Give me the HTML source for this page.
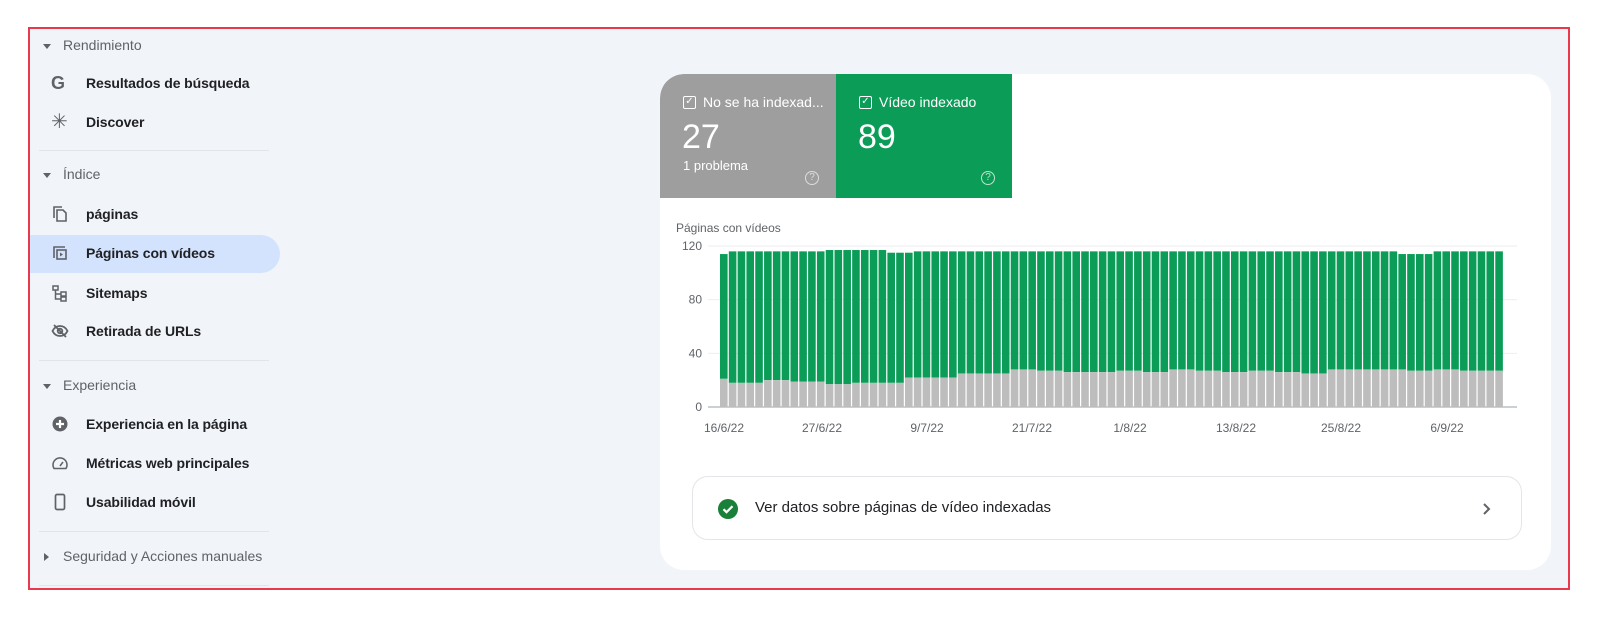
<!DOCTYPE html>
<html><head><meta charset="utf-8"><style>
*{margin:0;padding:0;box-sizing:border-box}
body{width:1600px;height:623px;background:#fff;font-family:"Liberation Sans",Arial,sans-serif;position:relative;overflow:hidden}
#frame{position:absolute;left:28px;top:27px;width:1542px;height:563px;border:2px solid #e8394d;background:#f1f4f9;overflow:hidden}
.a{position:absolute}
.hd{position:absolute;left:33px;font-size:14px;color:#5f6368}
.tri{position:absolute;left:13px;width:0;height:0;border-left:4px solid transparent;border-right:4px solid transparent;border-top:5px solid #5f6368}
.tri.r{border-top:4px solid transparent;border-bottom:4px solid transparent;border-left:5px solid #5f6368;border-right:0}
.it{position:absolute;left:56px;font-size:14px;color:#202124;font-weight:bold;letter-spacing:-0.1px}
.ic{position:absolute;left:21px;width:18px;height:18px}
.div{position:absolute;left:9px;width:230px;height:1px;background:#e1e4e8}
</style></head><body>
<div id="frame">
 <div class="a" style="left:-2px;top:206px;width:252px;height:38px;background:#d3e3fd;border-radius:0 19px 19px 0"></div>
 <div class="tri" style="top:15px"></div><div class="hd" style="top:8px">Rendimiento</div>
 <div class="ic" style="top:45px;font-weight:bold;font-size:18px;color:#5f6368;line-height:18px">G</div><div class="it" style="top:46px">Resultados de búsqueda</div>
 <div class="ic" style="top:84px;font-size:20px;color:#5f6368;line-height:18px">✳</div><div class="it" style="top:85px">Discover</div>
 <div class="div" style="top:121px"></div>
 <div class="tri" style="top:144px"></div><div class="hd" style="top:137px">Índice</div>
 <svg class="ic" style="top:176px" viewBox="0 0 18 18" fill="none" stroke="#5f6368" stroke-width="1.6"><path d="M3 13V2h8"/><path d="M6 5h6l3 3v8H6z"/></svg><div class="it" style="top:177px">páginas</div>
 <svg class="ic" style="top:215px" viewBox="0 0 18 18" fill="none" stroke="#5f6368" stroke-width="1.6"><path d="M3 14V3h11"/><rect x="6" y="6" width="9" height="9"/><path d="M9 8.5v4l3-2z" fill="#5f6368" stroke="none"/></svg><div class="it" style="top:216px">Páginas con vídeos</div>
 <svg class="ic" style="top:255px" viewBox="0 0 18 18" fill="none" stroke="#5f6368" stroke-width="1.5"><rect x="2" y="2" width="5" height="4"/><rect x="10" y="8" width="5" height="4"/><rect x="10" y="13" width="5" height="4"/><path d="M4.5 6v9h5.5M4.5 10h5.5"/></svg><div class="it" style="top:256px">Sitemaps</div>
 <svg class="ic" style="top:293px" viewBox="0 0 18 18" fill="none" stroke="#5f6368" stroke-width="1.8"><path d="M1.5 9c2-4 5-5 7.5-5s5.5 1 7.5 5c-2 4-5 5-7.5 5s-5.5-1-7.5-5z"/><circle cx="9" cy="9" r="2.3"/><path d="M3 3l12 12"/></svg><div class="it" style="top:294px">Retirada de URLs</div>
 <div class="div" style="top:331px"></div>
 <div class="tri" style="top:355px"></div><div class="hd" style="top:348px">Experiencia</div>
 <svg class="ic" style="top:386px" viewBox="0 0 18 18"><circle cx="9" cy="9" r="7.5" fill="#5f6368"/><path d="M9 5v8M5 9h8" stroke="#fff" stroke-width="2.2"/></svg><div class="it" style="top:387px">Experiencia en la página</div>
 <svg class="ic" style="top:425px" viewBox="0 0 18 18" fill="none" stroke="#5f6368" stroke-width="1.5"><path d="M3 14.5a7 7 0 1 1 12 0z"/><path d="M9 12l3-4"/></svg><div class="it" style="top:426px">Métricas web principales</div>
 <svg class="ic" style="top:464px" viewBox="0 0 18 18" fill="none" stroke="#5f6368" stroke-width="1.7"><rect x="4.5" y="1.5" width="9" height="15" rx="1.5"/></svg><div class="it" style="top:465px">Usabilidad móvil</div>
 <div class="div" style="top:502px"></div>
 <div class="tri r" style="top:524px;left:14px"></div><div class="hd" style="top:519px">Seguridad y Acciones manuales</div>
 <div class="div" style="top:556px"></div>

 <div class="a" style="left:630px;top:45px;width:891px;height:496px;background:#fff;border-radius:24px;overflow:hidden">
  <div class="a" style="left:0;top:0;width:176px;height:124px;background:#9e9e9e;border-top-left-radius:24px;color:#fff">
   <div class="a" style="left:23px;top:22px;width:13px;height:13px;border:1.5px solid #fff;border-radius:2px;font-size:10px;line-height:10px;text-align:center">✓</div>
   <div class="a" style="left:43px;top:20px;font-size:14px">No se ha indexad...</div>
   <div class="a" style="left:22px;top:44px;font-size:34px">27</div>
   <div class="a" style="left:23px;top:84px;font-size:13px">1 problema</div>
   <div class="a" style="left:145px;top:97px;width:14px;height:14px;border:1.3px solid #ddd;border-radius:50%;font-size:10px;line-height:12px;text-align:center;color:#ddd">?</div>
  </div>
  <div class="a" style="left:176px;top:0;width:176px;height:124px;background:#0b9d57;color:#fff">
   <div class="a" style="left:23px;top:22px;width:13px;height:13px;border:1.5px solid #fff;border-radius:2px;font-size:10px;line-height:10px;text-align:center">✓</div>
   <div class="a" style="left:43px;top:20px;font-size:14px">Vídeo indexado</div>
   <div class="a" style="left:22px;top:44px;font-size:34px">89</div>
   <div class="a" style="left:145px;top:97px;width:14px;height:14px;border:1.3px solid #bfe3cd;border-radius:50%;font-size:10px;line-height:12px;text-align:center;color:#bfe3cd">?</div>
  </div>
  <div class="a" style="left:16px;top:147px;font-size:12px;color:#5f6368">Páginas con vídeos</div>
  <svg class="a" style="left:0;top:0" width="891" height="400" id="ch"></svg>
  <div class="a" style="left:32px;top:402px;width:830px;height:64px;border:1px solid #e3e5e8;border-radius:16px">
   <svg class="a" style="left:25px;top:22px" width="20" height="20" viewBox="0 0 20 20"><circle cx="10" cy="10" r="10" fill="#188038"/><path d="M5.5 10.2l3 3 6-6" stroke="#fff" stroke-width="2.2" fill="none"/></svg>
   <div class="a" style="left:62px;top:22px;font-size:15px;color:#202124">Ver datos sobre páginas de vídeo indexadas</div>
   <svg class="a" style="left:788px;top:25px" width="12" height="14" viewBox="0 0 12 14"><path d="M3 2l5 5-5 5" stroke="#5f6368" stroke-width="2" fill="none"/></svg>
  </div>
 </div>
</div>
<script>
var s=document.getElementById('ch'),h='';
var ox=630+30,oy=45+29;
function X(x){return x-ox}function Y(y){return y-oy}
var y0=407,k=161/120;
[[0,'0'],[40,'40'],[80,'80'],[120,'120']].forEach(function(t){var y=y0-t[0]*k;
h+='<line x1="'+X(708)+'" x2="'+X(1517)+'" y1="'+Y(y)+'" y2="'+Y(y)+'" stroke="'+(t[0]?'#eceef0':'#9aa0a6')+'"/>';
h+='<text x="'+X(702)+'" y="'+(Y(y)+4)+'" text-anchor="end" font-size="12" fill="#5f6368" font-family="Liberation Sans">'+t[1]+'</text>';});
var g=[21,18,18,18,18,20,20,20,19,19,19,19,17,17,17,18,18,18,18,18,18,22,22,22,22,22,22,25,25,25,25,25,25,28,28,28,27,27,27,26,26,26,26,26,26,27,27,27,26,26,26,28,28,28,27,27,27,26,26,26,27,27,27,26,26,26,25,25,25,28,28,28,28,28,28,28,28,28,27,27,27,28,28,28,27,27,27,27,27];
for(var i=0;i<89;i++){var t=116;if(i==0)t=114;else if(i>=12&&i<=18)t=117;else if(i>=19&&i<=21)t=115;else if(i>=77&&i<=80)t=114;
var x=720+i*8.81,gv=g[i]||27;
h+='<rect x="'+X(x)+'" y="'+Y(y0-t*k)+'" width="7.6" height="'+((t-gv)*k)+'" fill="#0b9d57"/>';
h+='<rect x="'+X(x)+'" y="'+Y(y0-gv*k)+'" width="7.6" height="'+(gv*k)+'" fill="#bdbdbd"/>';}
[[724,'16/6/22'],[822,'27/6/22'],[927,'9/7/22'],[1032,'21/7/22'],[1130,'1/8/22'],[1236,'13/8/22'],[1341,'25/8/22'],[1447,'6/9/22']].forEach(function(d){
h+='<text x="'+X(d[0])+'" y="'+Y(432)+'" text-anchor="middle" font-size="12" fill="#5f6368" font-family="Liberation Sans">'+d[1]+'</text>';});
s.innerHTML=h;
</script>
</body></html>
